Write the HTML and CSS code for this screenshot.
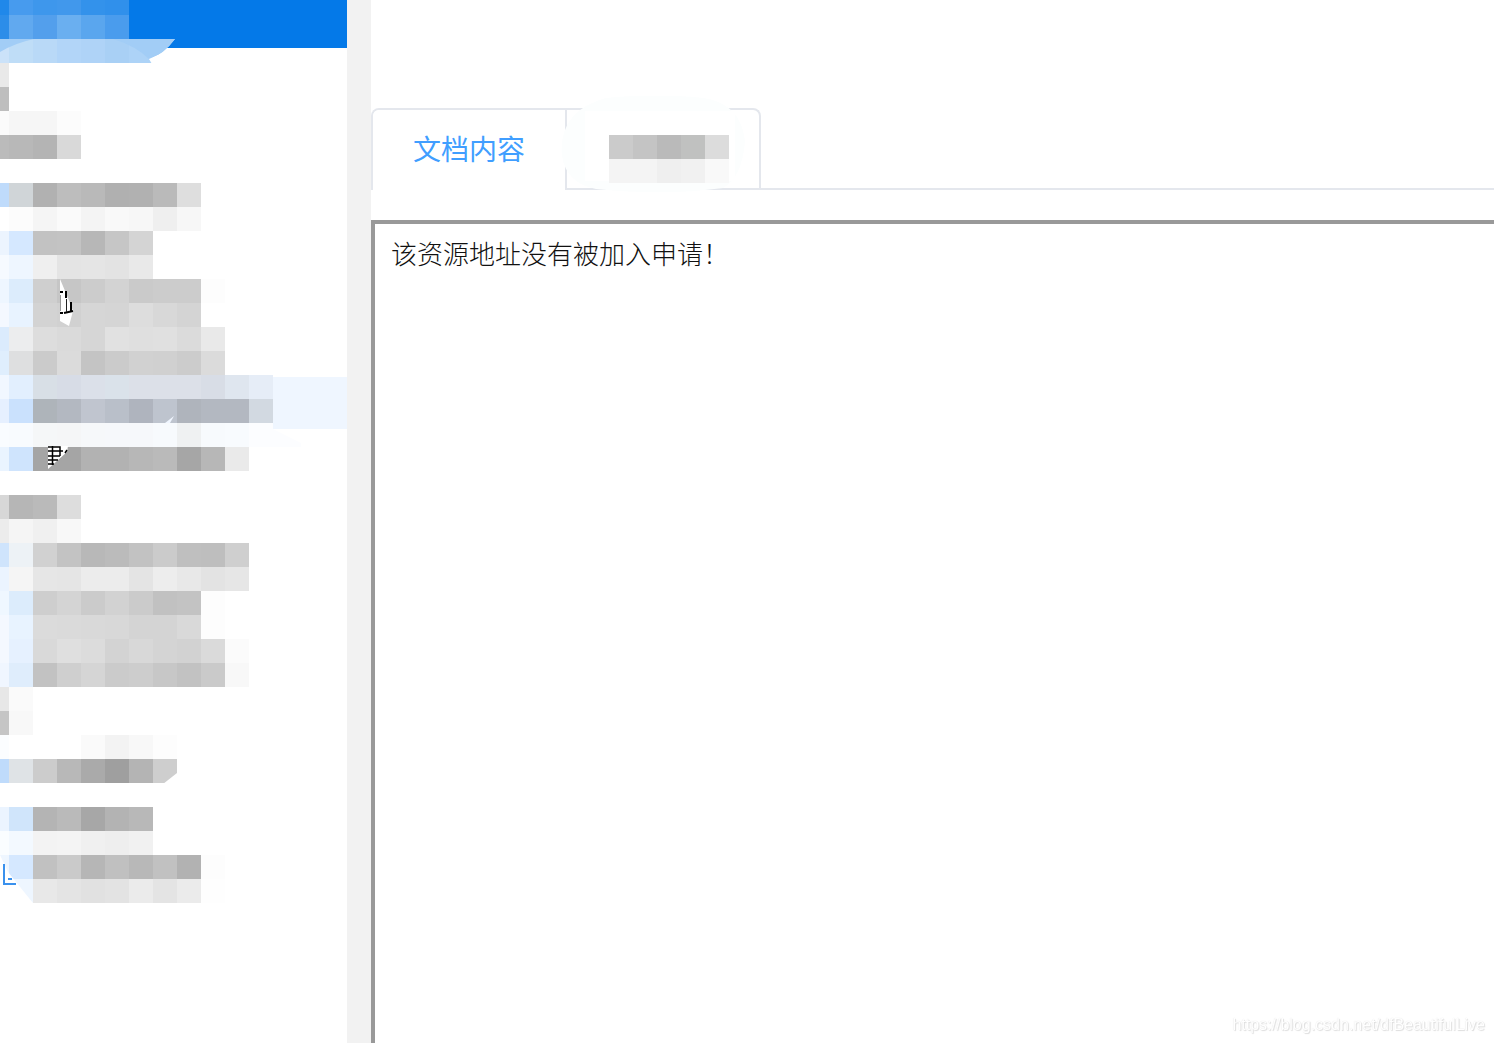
FILE: index.html
```html
<!DOCTYPE html>
<html lang="zh-CN">
<head>
<meta charset="utf-8">
<title>文档内容</title>
<link rel="stylesheet" href="styles.css">
</head>
<body>
<div class="layout">
  <aside class="sidebar">
    <header class="brand"></header>
    <nav class="tree" aria-label="目录"><a class="tree-item" href="#" aria-current="page" aria-label="当前文档"></a></nav>
    <svg class="mosaic" width="347" height="920" aria-hidden="true">
      <path fill="#a2cdf6" d="M0 39H175Q164 54 149 59L152 63H0Z"/>
      <g id="cells"></g>
      <path fill="#a2cdf6" d="M0 39H34Q15 43 0 52ZM113 39H175Q164 54 149 59Q136 46 113 39Z"/>
      <path fill="#fff" d="M149 59L158 55V64H152ZM60 279L68 298L73 311L69 326L60 321Z"/>
      <path fill="none" stroke="#000" stroke-width="2" d="M60 292H63M60 313H63M66 291V298M71 302V312M64 313L73 311"/>
      <path fill="none" stroke="#222" d="M66.500 299V312"/>
      <path fill="none" stroke="#999" d="M60.500 295V311"/>
      <path fill="#fff" d="M48 446H68L67 452L48 469Z"/>
      <path fill="none" stroke="#000" stroke-width="1.500" d="M48 447H60V456M48 451H63M48 456H60M48 460H58M48 464H54M52.500 446V465M65 453L67 450"/>
      <path fill="#f0f6ff" d="M165 423L174 416L170 423Z"/>
      <path fill="#fcfdff" d="M273 429L301 443V447H249V429Z"/>
      <path fill="#fff" d="M177 773V784H163ZM0 855L8 872L33 903H0Z"/>
      <path fill="none" stroke="#3a91ed" stroke-width="2" d="M4 864V884H16M8 879H12"/>
    </svg>
  </aside>
  <main class="main">
    <div class="tabs">
      <div class="tab-list" role="tablist">
        <button class="tab active" role="tab" aria-selected="true" aria-controls="doc">文档内容</button>
        <button class="tab" role="tab" aria-selected="false" aria-label="其他">
          <svg class="blurred" width="184" height="98" aria-hidden="true">
            <path fill="#fcfefe" d="M45 2Q95-3 143 2Q180 8 184 45Q181 82 162 92Q105 100 35 93Q5 87 1 60Q-3 15 45 2Z"/>
            <path fill="#fff" d="M24 15H174V85H24Z"/>
            <g transform="translate(48 39)">
              <path fill="#cbcbcb" d="M0 0h24v24H0z"/><path fill="#c4c4c4" d="M24 0h24v24H24z"/><path fill="#bababa" d="M48 0h24v24H48z"/><path fill="#c0c1c0" d="M72 0h24v24H72z"/><path fill="#dcdcdc" d="M96 0h24v24H96z"/>
              <path fill="#f4f4f4" d="M0 24h48v24H0z"/><path fill="#efefef" d="M48 24h24v24H48z"/><path fill="#f1f1f1" d="M72 24h24v24H72z"/><path fill="#f9f9f9" d="M96 24h24v24H96z"/>
            </g>
          </svg>
        </button>
      </div>
    </div>
    <section class="doc" id="doc" role="tabpanel"><p>该资源地址没有被加入申请！</p></section>
  </main>
</div>
<div class="watermark">https://blog.csdn.net/dfBeautifulLive</div>
<script src="mosaic.js"></script>
</body>
</html>
```
FILE: styles.css
```css
* { box-sizing: border-box; }
body { margin: 0; background: #fff; font-family: "Noto Sans CJK SC", sans-serif; }
.layout { display: flex; min-height: 100vh; }
.sidebar { position: relative; flex: 0 0 371px; border-right: 24px solid #f2f2f2; background: #fff; }
.brand { height: 48px; background: #0479e8; }
.tree { padding-top: 329px; }
.tree-item { display: block; height: 52px; background: #eff6ff; }
.mosaic { position: absolute; top: 0; left: 0; }
.main { flex: 1; min-width: 0; display: flex; flex-direction: column; padding-top: 108px; }
.tabs { margin-bottom: 30px; box-shadow: inset 0 -2px #e4e7ed; }
.tab-list { display: inline-flex; vertical-align: top; border: 2px solid #e4e7ed; border-bottom: 0; border-radius: 8px 8px 0 0; }
.tab { position: relative; width: 194px; height: 80px; padding: 0 0 4px; border: 0; background: transparent; font: 28px/40px "Noto Sans CJK SC", sans-serif; color: #303133; }
.tab.active { width: 192px; background: #fff; border-radius: 6px 0 0 0; color: #409eff; }
.tab + .tab { border-left: 2px solid #e4e7ed; border-bottom: 2px solid #e4e7ed; }
.blurred { position: absolute; top: -14px; left: -6px; }
.doc { flex: 1; padding: 12px 16px; border: 4px solid #999; border-right: 0; border-bottom: 0; }
.doc p { margin: 0; font: 300 26px/40px "Liberation Serif", "Noto Sans CJK SC", serif; color: #111; }
.watermark { position: fixed; right: 9px; bottom: 8px; font: 16px/20px "Liberation Sans", sans-serif; color: #fff; text-shadow: 1px 1px 1px #ddd, 0 0 1px #ddd; }
```
FILE: mosaic.js
```js
// Each row: top edge, then the colour of each 24px cell starting at x = -15 ("-" leaves a gap).
const rows = [
  [-9, "2088ea 479bee 3e97ec 4198ec 3392eb 3090eb"],
  [15, "2c8de9 61a9ef 539fec 6aaff0 5aa6ee 4a9ced"],
  [39, "cbe2f9 bfddf7 b9d9f7 b2d5f8 afd3f7 a9d0f5 add3f7"],
  [63, "e9e9e9"],
  [87, "bebebe"],
  [111, "fbfbfb f6f6f6 f6f6f6 fcfcfc"],
  [135, "bbbbbb b8b8b8 b4b4b4 d9d9d9"],
  [183, "bfdbfb d0d5d8 b1b1b1 bdbdbd b9b9b9 b0b0b0 b1b1b1 bababa dedede"],
  [207, "ffffff fcfcfc f5f5f5 fafafa f4f4f4 f9f9f9 f7f7f7 efefef f7f7f7"],
  [231, "ecf4fe d5e8ff c2c2c2 c3c3c3 b7b7b7 c6c6c6 d4d4d4"],
  [255, "f6faff eef6ff efefef e4e4e4 e5e5e5 e3e3e3 e9e9e9"],
  [279, "eef6ff dcecfc cfcfcf c6c6c6 cccccc d3d3d3 cacaca cccccc cccccc fdfdfd"],
  [303, "f4f8ff e8f3ff d3d3d3 d1d1d1 d6d6d6 d5d5d5 dddddd d8d8d8 d4d4d4"],
  [327, "dbebfd ecedee dddddd dadada d6d6d6 e1e1e1 dfdfdf e0e0e0 dbdbdb e9e9e9"],
  [351, "dfeefd dedfe0 cbcbcb dbdbdb c4c4c4 cbcbcb d1d1d1 d0d0d0 cccccc dbdbdb"],
  [375, "f1f7ff e2effe d8dfe6 d7dce6 dbe0e9 dae2ea dce0e8 dce0e8 dce0e8 d8dde6 dfe6ef e6edf7"],
  [399, "e6f0ff cae1fd aeb4ba b3b8c1 c0c5cf b9bfc9 afb4be bec4ce afb4bc b3b8c1 b3b8c1 d2d9e1"],
  [423, "f9fcff f8fbfe f5f7f8 f5f6f7 f6f8fa f6f8fb f6f8fb f7fafd eff1f2 f7fafd f8fbfe fcfdff"],
  [447, "eaf4ff cfe4fd a5a5a5 a5a5a5 b2b2b2 b2b2b2 b7b7b7 bababa a6a6a6 b7b7b7 eaeaea"],
  [495, "d7d7d7 b6b6b6 bababa dddddd"],
  [519, "ececec f5f5f5 f0f0f0 f8f8f8"],
  [543, "cfe4fc edf2f6 d1d1d1 c3c3c3 b8b8b8 bbbbbb c2c2c2 cbcbcb bfbfbf bebebe cfcfcf"],
  [567, "ebf4ff f5f5f5 e6e6e6 e5e5e5 ececec ececec e4e4e4 ededed e8e8e8 e3e3e3 e6e6e6"],
  [591, "eff7ff dcecfc cecece d4d4d4 cbcbcb d2d2d2 cbcbcb c1c1c1 c3c3c3 fdfdfd"],
  [615, "f4f8ff e8f3ff dbdbdb dadada d9d9d9 d8d8d8 d4d4d4 d4d4d4 d9d9d9 fdfdfd"],
  [639, "f4f8ff e6f1ff d9d9d9 dfdfdf dcdcdc d3d3d3 d8d8d8 d4d4d4 d2d2d2 dadada fbfbfb"],
  [663, "f0f6ff dfedfc c2c2c2 cfcfcf d5d5d5 cbcbcb cdcdcd c7c7c7 c2c2c2 cacaca f8f8f8"],
  [687, "e7e7e7 fafafa"],
  [711, "c5c5c5 f8f8f8"],
  [735, "fbfdff - - - fafafa f3f3f3 f8f8f8 fdfdfd"],
  [759, "bfdbfb dfe3e6 cccccc b8b8b8 aaaaaa 9f9f9f b4b4b4 cecece"],
  [807, "ebf4ff d0e5fb b4b4b4 bababa a7a7a7 b3b3b3 b8b8b8"],
  [831, "fafdff f3f9ff f3f3f3 f4f4f4 f0f0f0 eeeeee f1f1f1"],
  [855, "eef6ff d5e8ff c1c1c1 cacaca b6b6b6 c0c0c0 b8b8b8 c1c1c1 b2b2b2 fdfdfd"],
  [879, "eef6ff eef6ff e8e8e8 e4e4e4 e1e1e1 e3e3e3 ebebeb e4e4e4 ebebeb fefefe"]
];
const layer = document.getElementById("cells");
for (const [top, colours] of rows) {
  colours.split(" ").forEach((colour, i) => {
    if (colour === "-") return;
    const cell = document.createElementNS("http://www.w3.org/2000/svg", "rect");
    cell.setAttribute("x", i * 24 - 15);
    cell.setAttribute("y", top);
    cell.setAttribute("width", 24);
    cell.setAttribute("height", 24);
    cell.setAttribute("fill", "#" + colour);
    layer.append(cell);
  });
}
```
